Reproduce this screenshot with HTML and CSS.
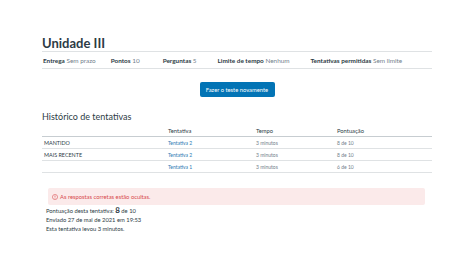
FILE: index.html
```html
<!DOCTYPE html>
<html lang="pt-BR">
<head>
<meta charset="UTF-8">
<title>Unidade III</title>
<link rel="stylesheet" href="styles.css">
</head>
<body>

<div class="page">
    <h1 class="quiz-title">Unidade III</h1>

    <!-- detalhes do teste -->
    <ul class="quiz-info">
        <li><b>Entrega</b> Sem prazo</li>
        <li><b>Pontos</b> 10</li>
        <li><b>Perguntas</b> 5</li>
        <li><b>Limite de tempo</b> Nenhum</li>
        <li><b>Tentativas permitidas</b> Sem limite</li>
    </ul>

    <div class="retake">
        <button class="btn-primary">Fazer o teste novamente</button>
    </div>

    <h2 class="history-title">Histórico de tentativas</h2>
    <div class="history">
        <div class="history-row head">
            <span></span>
            <span>Tentativa</span>
            <span>Tempo</span>
            <span>Pontuação</span>
        </div>
        <div class="history-row">
            <span class="label">MANTIDO</span>
            <a href="#">Tentativa 2</a>
            <span>3 minutos</span>
            <span>8 de 10</span>
        </div>
        <div class="history-row">
            <span class="label">MAIS RECENTE</span>
            <a href="#">Tentativa 2</a>
            <span>3 minutos</span>
            <span>8 de 10</span>
        </div>
        <div class="history-row">
            <span class="label"></span>
            <a href="#">Tentativa 1</a>
            <span>3 minutos</span>
            <span>6 de 10</span>
        </div>
    </div>

    <div class="alert">
        <svg class="alert-icon" viewBox="0 0 10 10" width="6" height="6">
            <circle cx="5" cy="5" r="4.3" fill="none" stroke="currentColor" stroke-width="0.9"/>
            <rect x="4.5" y="2.3" width="1" height="3.4" fill="currentColor"/>
            <rect x="4.5" y="6.6" width="1" height="1" fill="currentColor"/>
        </svg>
        As respostas corretas estão ocultas.
    </div>

    <div class="summary">
        <p>Pontuação desta tentativa: <span class="score">8</span> de 10</p>
        <p>Enviado 27 de mai de 2021 em 19:53</p>
        <p>Esta tentativa levou 3 minutos.</p>
    </div>
</div>

</body>
</html>
```

FILE: styles.css
```css
* {
    box-sizing: border-box;
    margin: 0;
    padding: 0;
}

body {
    background-color: #fff;
    color: #2d3b45;
    font-family: Lato, "Open Sans", sans-serif;
}

.page {
    padding: 35px 42px 0;
}

.quiz-title {
    font-size: 13px;
    line-height: 16px;
    font-weight: 700;
    color: #2d3b45;
}

.quiz-info {
    list-style: none;
    display: flex;
    gap: 21px;
    height: 18px;
    align-items: center;
    padding-left: 1px;
    border-top: 1px solid #dfe2e4;
    border-bottom: 1px solid #dfe2e4;
    font-size: 6.4px;
    color: #73818c;
}

.quiz-info li:first-child {
    margin-right: -6px;
}

.quiz-info li:nth-child(2) {
    margin-right: 2px;
}

.quiz-info b {
    color: #2d3b45;
    font-weight: 700;
}

.retake {
    display: flex;
    justify-content: center;
    margin-top: 13px;
}

.btn-primary {
    width: 75px;
    height: 15px;
    background-color: #0374b5;
    color: #fff;
    border: none;
    border-radius: 2px;
    font-family: Lato, sans-serif;
    font-size: 5.8px;
}

.history-title {
    font-size: 9px;
    line-height: 12px;
    font-weight: 400;
    margin-top: 14px;
    color: #2d3b45;
}

.history {
    margin-top: 1px;
}

.history-row {
    display: grid;
    grid-template-columns: 124px 88px 81px 1fr;
    align-items: center;
    height: 12px;
    padding-left: 2px;
    border-bottom: 1px solid #dfe2e4;
    font-size: 5px;
    color: #73818c;
}

.history-row.head {
    height: 13px;
    font-size: 5.8px;
    color: #2d3b45;
    border-bottom-color: #c7cdd1;
}

.history-row .label {
    color: #2d3b45;
    font-size: 5.4px;
}

.history-row a {
    color: #2d7bb3;
    text-decoration: none;
}

.alert {
    display: flex;
    align-items: center;
    gap: 2px;
    height: 17px;
    margin: 15px 7px 0 6px;
    padding-left: 4px;
    background-color: #fbeaea;
    border-radius: 2px;
    color: #d8494c;
    font-size: 5.8px;
}

.summary {
    padding: 1px 0 0 4px;
    font-size: 5.8px;
    line-height: 9px;
    color: #2d3b45;
}

.score {
    font-size: 8px;
    font-weight: 700;
}
```
